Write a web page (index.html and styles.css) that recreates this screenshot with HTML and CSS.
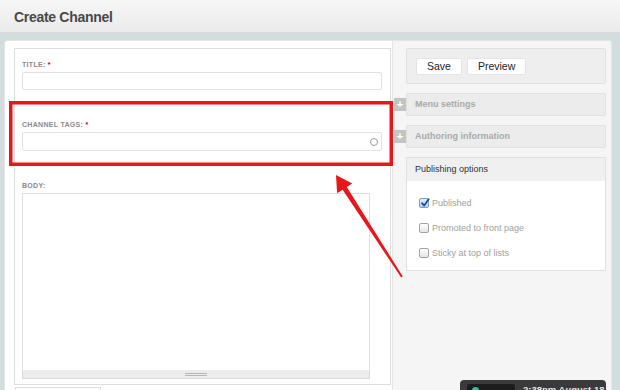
FILE: index.html
```html
<!DOCTYPE html>
<html lang="en">
<head>
    <meta charset="UTF-8">
    <title>Create Channel</title>
    <link rel="stylesheet" href="styles.css">
</head>
<body>
    <!-- Page title -->
    <header class="page-header">
        <h1>Create Channel</h1>
    </header>

    <div class="page">
        <div class="panel">
            <!-- Main form column -->
            <div class="content">
                <form class="node-form">
                    <div class="field">
                        <label>Title: <span class="req">*</span></label>
                        <input class="form-text" type="text">
                    </div>
                    <div class="field">
                        <label>Channel tags: <span class="req">*</span></label>
                        <div class="autocomplete">
                            <input class="form-text form-tags" type="text">
                            <span class="throbber"></span>
                        </div>
                    </div>
                    <div class="field field-body">
                        <label>Body:</label>
                        <div class="textarea-wrap">
                            <textarea class="form-textarea"></textarea>
                            <div class="grippie"><span></span></div>
                        </div>
                    </div>
                </form>
                <div class="vertical-tabs"></div>
            </div>

            <!-- Sidebar -->
            <aside class="sidebar">
                <div class="actions">
                    <button class="button" type="button">Save</button>
                    <button class="button" type="button">Preview</button>
                </div>

                <div class="collapsible">
                    <span class="toggle">+</span>
                    <div class="bar">Menu settings</div>
                </div>
                <div class="collapsible">
                    <span class="toggle">+</span>
                    <div class="bar">Authoring information</div>
                </div>

                <div class="fieldset">
                    <div class="fieldset-legend">Publishing options</div>
                    <div class="fieldset-body">
                        <div class="check-row">
                            <span class="checkbox checked">
                                <svg viewBox="0 0 10 10" width="10" height="10"><path d="M2 5.2 L4.2 7.6 L8.6 1.2" fill="none" stroke="#1f4f96" stroke-width="1.8" stroke-linecap="round" stroke-linejoin="round"/></svg>
                            </span>
                            <span>Published</span>
                        </div>
                        <div class="check-row">
                            <span class="checkbox"></span>
                            <span>Promoted to front page</span>
                        </div>
                        <div class="check-row">
                            <span class="checkbox"></span>
                            <span>Sticky at top of lists</span>
                        </div>
                    </div>
                </div>
            </aside>
        </div>
    </div>

    <!-- Red annotation drawn over the screenshot -->
    <svg class="annotation" viewBox="0 0 620 390" width="620" height="390">
        <rect x="10.75" y="102.75" width="380.5" height="61.5" fill="none" stroke="#e8171d" stroke-width="3.5"/>
        <polygon fill="#e8171d" points="402.8,276.5 401.2,277.5 342.6,189.8 337.1,193.3 336,175 352.2,183.5 346.8,187"/>
    </svg>

    <!-- Clock toast at the bottom -->
    <div class="toast">
        <span class="toast-app"><span class="dot"></span></span>
        <span class="toast-text">2:38pm August 18</span>
    </div>
</body>
</html>
```

FILE: styles.css
```css
* {
    margin: 0;
    padding: 0;
    box-sizing: border-box;
    font-family: 'Liberation Sans', Arial, sans-serif;
}

html, body {
    height: 100%;
    overflow: hidden;
}

body {
    background-color: #d2dddd;
    color: #333;
    position: relative;
}

.page-header {
    height: 33px;
    padding: 9px 14px 0;
    background: linear-gradient(#f6f6f6, #ebebeb);
    border-bottom: 1px solid #dadada;
}

.page-header h1 {
    font-size: 14px;
    line-height: 16px;
    color: #484848;
    letter-spacing: -0.3px;
}

.page {
    padding: 7px 8px 0 4px;
}

.panel {
    display: flex;
    height: 400px;
    background-color: #fff;
    border: 1px solid #e2e6e6;
    border-radius: 3px 3px 0 0;
}

/* main column */
.content {
    width: 387px;
    padding: 7px 0 0 9px;
}

.node-form {
    width: 377px;
    padding: 11px 8px 5px 7px;
    border: 1px solid #dedede;
    background-color: #fff;
}

.field {
    margin-bottom: 30px;
}

.field-body {
    margin-bottom: 0;
}

label {
    display: block;
    margin-bottom: 2px;
    font-size: 7px;
    line-height: 10px;
    font-weight: bold;
    text-transform: uppercase;
    letter-spacing: 0.3px;
    color: #8a8a8a;
}

.req {
    color: #d20000;
}

.form-text {
    display: block;
    width: 100%;
    height: 18px;
    border: 1px solid #e2e2e2;
    border-radius: 2px;
    background-color: #fff;
}

.autocomplete {
    position: relative;
}

.form-tags {
    height: 19px;
}

.throbber {
    position: absolute;
    right: 4px;
    top: 6px;
    width: 8px;
    height: 8px;
    border: 1px solid #9a9a9a;
    border-radius: 50%;
}

.textarea-wrap {
    width: 348px;
}

.form-textarea {
    display: block;
    width: 100%;
    height: 177px;
    resize: none;
    border: 1px solid #e0e0e0;
    border-bottom: none;
    background-color: #fff;
}

.grippie {
    height: 9px;
    display: flex;
    align-items: center;
    justify-content: center;
    background-color: #ececec;
    border: 1px solid #dcdcdc;
    border-top: none;
}

.grippie span {
    width: 22px;
    height: 3px;
    border-top: 1px solid #b8b8b8;
    border-bottom: 1px solid #b8b8b8;
}

.vertical-tabs {
    width: 86px;
    height: 20px;
    margin: 2px 0 0 1px;
    border: 1px solid #dcdcdc;
}

/* sidebar */
.sidebar {
    flex: 1;
    padding: 7px 5px 0 1px;
    background-color: #f5f5f5;
    border-left: 1px solid #e4e4e4;
}

.actions {
    display: flex;
    gap: 5px;
    margin-left: 12px;
    padding: 9px 9px 8px;
    background-color: #eee;
    border: 1px solid #e0e0e0;
    border-radius: 2px;
}

.button {
    height: 17px;
    padding: 0 10px;
    font-size: 10.5px;
    line-height: 15px;
    color: #222;
    background-color: #fff;
    border: 1px solid #e4e4e4;
    border-radius: 2px;
}

.collapsible {
    display: flex;
    align-items: center;
    margin-top: 9px;
}

.toggle {
    width: 12px;
    height: 13px;
    font-size: 11px;
    line-height: 13px;
    font-weight: bold;
    text-align: center;
    color: #fff;
    background-color: #c4c4c4;
}

.bar {
    flex: 1;
    height: 23px;
    padding-left: 8px;
    font-size: 9px;
    line-height: 21px;
    font-weight: bold;
    color: #a9a9a9;
    background-color: #ececec;
    border: 1px solid #e0e0e0;
    border-radius: 2px;
}

.fieldset {
    margin: 9px 0 0 12px;
    background-color: #fff;
    border: 1px solid #e0e0e0;
}

.fieldset-legend {
    height: 23px;
    padding-left: 8px;
    font-size: 9px;
    line-height: 23px;
    color: #333;
    background-color: #f0f0f0;
}

.fieldset-body {
    padding: 15px 0 10px 12px;
}

.check-row {
    display: flex;
    align-items: center;
    gap: 3px;
    height: 14px;
    margin-bottom: 11px;
    font-size: 9px;
    color: #a0a0a0;
}

.check-row:last-child {
    margin-bottom: 0;
}

.checkbox {
    width: 10px;
    height: 10px;
    border: 1px solid #a4a4a4;
    border-radius: 2px;
    background: linear-gradient(#fff, #e6e6e6);
}

.checkbox.checked {
    border-color: #7d9cc6;
    background: linear-gradient(#e3eefb, #b9d0ee);
}

.checkbox svg {
    display: block;
    margin: -1px 0 0 0;
}

/* overlays */
.annotation {
    position: absolute;
    top: 0;
    left: 0;
    pointer-events: none;
}

.toast {
    position: absolute;
    left: 460px;
    top: 380px;
    width: 146px;
    height: 24px;
    display: flex;
    align-items: flex-start;
    padding: 4px 0 0 7px;
    background-color: #3a3a3a;
    border-radius: 4px;
}

.toast-app {
    width: 48px;
    height: 16px;
    padding: 3px 0 0 5px;
    background-color: #1d1d1d;
    border-radius: 2px;
}

.dot {
    display: block;
    width: 7px;
    height: 7px;
    border-radius: 50%;
    background-color: #3bb8a6;
}

.toast-text {
    margin-left: 8px;
    font-size: 9.5px;
    font-weight: bold;
    line-height: 12px;
    color: #e2e2e2;
}
```
